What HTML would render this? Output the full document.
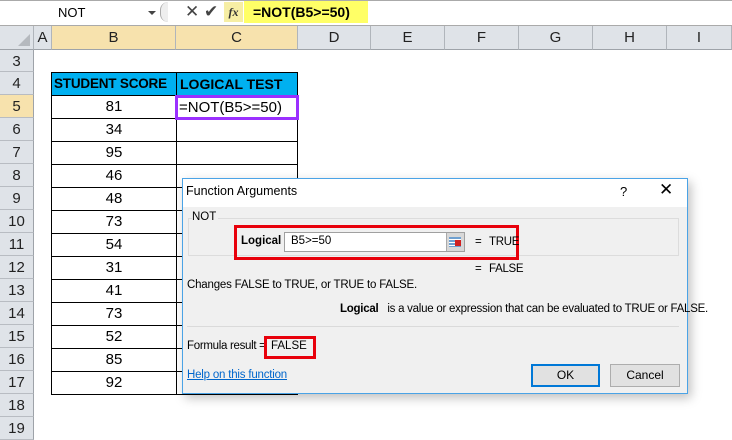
<!DOCTYPE html>
<html><head><style>
*{margin:0;padding:0;box-sizing:border-box}
body{width:732px;height:440px;overflow:hidden;background:#fff;font-family:"Liberation Sans",sans-serif;position:relative}
.a{position:absolute}
.ch{position:absolute;top:26px;height:24px;background:#dfe3e8;border-right:1px solid #b0b5bb;border-bottom:1px solid #9ea3a9;font-size:15px;color:#222;text-align:center;line-height:23px}
.rh{position:absolute;left:0;width:34px;height:23px;background:#dfe3e8;border-bottom:1px solid #b8bcc2;border-right:1px solid #9ea3a9;font-size:15px;color:#222;text-align:center;line-height:23px}
.cell{position:absolute;height:24px;border:1px solid #000;font-size:15px;line-height:22px;color:#000;white-space:nowrap;overflow:hidden}
.d{font-size:11.5px;color:#000;position:absolute;white-space:nowrap}
</style></head><body>
<div class="a" style="left:0;top:0;width:732px;height:26px;background:#fff;border-top:1px solid #aaa;border-bottom:1px solid #aaa"></div>
<div class="a" style="left:58px;top:5px;font-size:13px">NOT</div>
<div class="a" style="left:148px;top:11px;width:0;height:0;border-left:4px solid transparent;border-right:4px solid transparent;border-top:4px solid #444"></div>
<div class="a" style="left:160px;top:2px;width:8px;height:20px;border-left:1px solid #aaa;border-radius:10px 0 0 10px;background:#eee"></div>
<div class="a" style="left:185px;top:2px;font-size:17px;color:#444">✕</div>
<div class="a" style="left:204px;top:2px;font-size:17px;color:#444">✔</div>
<div class="a" style="left:224px;top:2px;width:19px;height:20px;background:#f6eea4;font:italic bold 12px 'Liberation Serif',serif;line-height:20px;text-align:center;color:#333">fx</div>
<div class="a" style="left:244px;top:1px;width:124px;height:22px;background:#ffff66;font-size:14px;font-weight:bold;line-height:22px;padding-left:9px">=NOT(B5&gt;=50)</div>
<div class="ch" style="left:0;width:34px;background:#dfe3e8"></div>
<div class="a" style="left:18px;top:34px;width:0;height:0;border-left:12px solid transparent;border-bottom:12px solid #b5b9be"></div>
<div class="ch" style="left:34px;width:18px">A</div>
<div class="ch" style="left:52px;width:124px;background:#f7e2ad">B</div>
<div class="ch" style="left:176px;width:122px;background:#f7e2ad">C</div>
<div class="ch" style="left:298px;width:73px">D</div>
<div class="ch" style="left:371px;width:74px">E</div>
<div class="ch" style="left:445px;width:74px">F</div>
<div class="ch" style="left:519px;width:74px">G</div>
<div class="ch" style="left:593px;width:74px">H</div>
<div class="ch" style="left:667px;width:65px">I</div>
<div class="rh" style="top:50px;height:22px">3</div>
<div class="rh" style="top:72px">4</div>
<div class="rh" style="top:95px;background:#f7e2ad">5</div>
<div class="rh" style="top:118px">6</div>
<div class="rh" style="top:141px">7</div>
<div class="rh" style="top:164px">8</div>
<div class="rh" style="top:187px">9</div>
<div class="rh" style="top:210px">10</div>
<div class="rh" style="top:233px">11</div>
<div class="rh" style="top:256px">12</div>
<div class="rh" style="top:279px">13</div>
<div class="rh" style="top:302px">14</div>
<div class="rh" style="top:325px">15</div>
<div class="rh" style="top:348px">16</div>
<div class="rh" style="top:371px">17</div>
<div class="rh" style="top:394px">18</div>
<div class="rh" style="top:417px">19</div>
<div class="cell" style="left:51px;top:72px;width:126px;background:#00b0f0;font-weight:bold;padding-left:2px;font-size:13.5px;letter-spacing:-0.2px">STUDENT SCORE</div>
<div class="cell" style="left:176px;top:72px;width:122px;background:#00b0f0;font-weight:bold;padding-left:3px;font-size:14px">LOGICAL TEST</div>
<div id="t"></div>
<script>
var v=[81,34,95,46,48,73,54,31,41,73,52,85,92],h='';
for(var i=0;i<13;i++){var y=95+i*23;h+='<div class="cell" style="left:51px;top:'+y+'px;width:126px;text-align:center">'+v[i]+'</div><div class="cell" style="left:176px;top:'+y+'px;width:122px"></div>';}
document.getElementById('t').innerHTML=h;
</script>
<div class="a" style="left:175px;top:95px;width:124px;height:25px;border:3px solid #9b30ff;font-size:15px;line-height:19px;padding-left:1px;background:#fff">=NOT(B5&gt;=50)</div>
<div class="a" style="left:182px;top:178px;width:506px;height:216px;background:#f0f0f0;border:1px solid #4aa3e6;box-shadow:3px 4px 10px rgba(0,0,0,.25)"></div>
<div class="a" style="left:183px;top:179px;width:504px;height:28px;background:#fff"></div>
<div class="d" style="left:186px;top:184px;font-size:12.5px">Function Arguments</div>
<div class="d" style="left:620px;top:184px;font-size:13px">?</div>
<div class="d" style="left:659px;top:180px;font-size:17px">✕</div>
<div class="a" style="left:188px;top:218px;width:491px;height:38px;border:1px solid #dcdcdc"></div>
<div class="d" style="left:192px;top:211px;background:#f0f0f0;padding-right:2px">NOT</div>
<div class="a" style="left:234px;top:225px;width:285px;height:35px;border:3px solid #e8000b"></div>
<div class="d" style="left:241px;top:235px;font-weight:bold">Logical</div>
<div class="a" style="left:284px;top:232px;width:181px;height:20px;background:#fff;border:1px solid #a0a0a0"></div>
<div class="d" style="left:291px;top:235px">B5&gt;=50</div>
<div class="a" style="left:446px;top:233px;width:18px;height:18px;background:#d8d8d8;border-left:1px solid #aaa"></div>
<div class="a" style="left:449px;top:237px;width:12px;height:10px;background:repeating-linear-gradient(#6fa0d0 0 2px,#fff 2px 3px)"></div>
<div class="a" style="left:455px;top:240px;width:6px;height:6px;background:#d02020"></div>
<div class="d" style="left:475px;top:236px">=</div>
<div class="d" style="left:489px;top:236px;letter-spacing:-0.3px">TRUE</div>
<div class="d" style="left:475px;top:263px">=</div>
<div class="d" style="left:489px;top:263px;letter-spacing:-0.3px">FALSE</div>
<div class="d" style="left:187px;top:279px;letter-spacing:-0.2px">Changes FALSE to TRUE, or TRUE to FALSE.</div>
<div class="d" style="right:24px;top:303px;letter-spacing:-0.25px"><b>Logical</b>&nbsp;&nbsp; is a value or expression that can be evaluated to TRUE or FALSE.</div>
<div class="a" style="left:187px;top:326px;width:492px;height:1px;background:#dadada"></div>
<div class="d" style="left:187px;top:340px;letter-spacing:-0.3px">Formula result =</div>
<div class="a" style="left:264px;top:336px;width:52px;height:23px;border:3px solid #e8000b"></div>
<div class="d" style="left:271px;top:340px">FALSE</div>
<div class="d" style="left:187px;top:369px;color:#0066cc;text-decoration:underline;letter-spacing:-0.2px">Help on this function</div>
<div class="a" style="left:531px;top:364px;width:69px;height:23px;background:#e1e1e1;border:2px solid #0078d7;font-size:12px;text-align:center;line-height:19px">OK</div>
<div class="a" style="left:610px;top:364px;width:70px;height:23px;background:#e1e1e1;border:1px solid #adadad;font-size:12px;text-align:center;line-height:21px">Cancel</div>
</body></html>
